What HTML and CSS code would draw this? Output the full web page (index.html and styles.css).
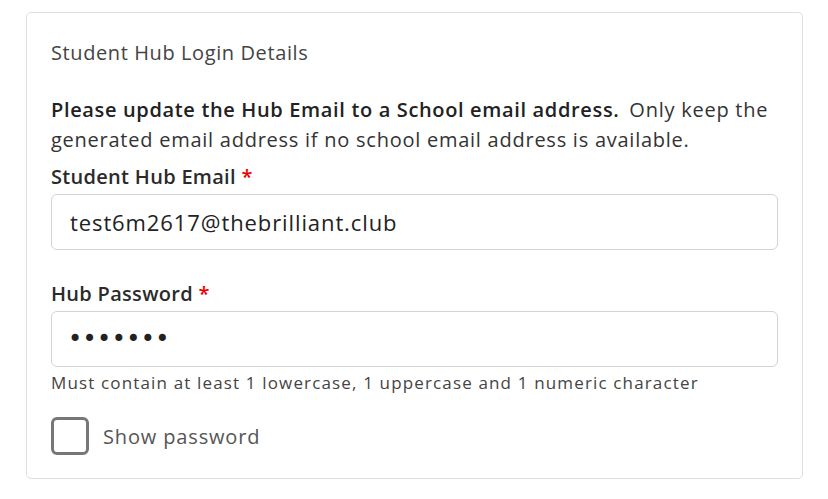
FILE: index.html
```html
<!DOCTYPE html>
<html lang="en">
<head>
    <meta charset="UTF-8">
    <meta name="viewport" content="width=device-width, initial-scale=1.0">
    <title>Student Hub Login Details</title>
    <link rel="stylesheet" href="styles.css">
</head>
<body>
    <div class="card">
        <h2 class="card-title">Student Hub Login Details</h2>

        <p class="intro">
            <strong>Please update the Hub Email to a School email address.</strong>
            Only keep the generated email address if no school email address is available.
        </p>

        <form id="hub-form">
            <label class="field-label" for="hub-email">Student Hub Email <span class="required">*</span></label>
            <input class="field-input" type="email" id="hub-email" name="hub-email" value="test6m2617@thebrilliant.club">

            <label class="field-label spaced" for="hub-password">Hub Password <span class="required">*</span></label>
            <input class="field-input" type="password" id="hub-password" name="hub-password" value="abcdefg">
            <small class="hint">Must contain at least 1 lowercase, 1 uppercase and 1 numeric character</small>

            <label class="check-row" for="show-password">
                <input type="checkbox" id="show-password">
                <span class="check-box"></span>
                <span>Show password</span>
            </label>
        </form>
    </div>

    <div class="next-row"><span class="required">*</span></div>

    <script>
        const toggle = document.getElementById('show-password');
        const password = document.getElementById('hub-password');

        toggle.addEventListener('change', function() {
            password.type = toggle.checked ? 'text' : 'password';
        });
    </script>
</body>
</html>
```

FILE: styles.css
```css
body {
    font-family: "Century Gothic", "Open Sans", "Liberation Sans", sans-serif;
    color: #333;
    background-color: #fff;
    margin: 0;
    padding: 0;
    overflow: hidden;
}

.card {
    margin: 12px 25px 0 26px;
    padding: 26px 24px 23px 24px;
    border: 1px solid #dcdfe3;
    border-radius: 5px;
}

.card-title {
    font-size: 20px;
    font-weight: normal;
    letter-spacing: 0.6px;
    color: #444;
    margin: 0 0 28px 0;
    line-height: 28px;
}

.intro {
    font-size: 20px;
    letter-spacing: 0.75px;
    line-height: 30px;
    margin: 0;
}

.intro strong {
    font-weight: 600;
    letter-spacing: 0.65px;
    color: #222;
    margin-right: 4px;
}

.field-label {
    display: block;
    font-size: 20px;
    font-weight: 600;
    letter-spacing: 0.3px;
    color: #2b2b2b;
    line-height: 30px;
    margin-top: 7px;
    margin-bottom: 2px;
}

.field-label.spaced {
    margin-top: 29px;
}

.required {
    color: #e00;
}

.field-input {
    display: block;
    box-sizing: border-box;
    width: 100%;
    height: 56px;
    padding: 0 18px;
    font-family: inherit;
    font-size: 22px;
    letter-spacing: 0.9px;
    color: #222;
    border: 1px solid #cfd4da;
    border-radius: 6px;
}

.field-input[type="password"] {
    font-family: "DejaVu Sans", sans-serif;
    font-size: 24px;
    letter-spacing: 0.4px;
    padding-left: 16px;
}

.hint {
    display: block;
    font-size: 17px;
    letter-spacing: 1.15px;
    color: #444;
    margin-top: 4px;
    line-height: 24px;
}

.check-row {
    display: flex;
    align-items: center;
    gap: 14px;
    margin-top: 22px;
    font-size: 20px;
    letter-spacing: 0.85px;
    color: #555;
}

.check-row input {
    display: none;
}

.check-box {
    width: 32px;
    height: 32px;
    border: 3px solid #777;
    border-radius: 6px;
}

.next-row {
    padding: 18px 81px 0 0;
    text-align: right;
    font-size: 20px;
    line-height: 20px;
}
```
